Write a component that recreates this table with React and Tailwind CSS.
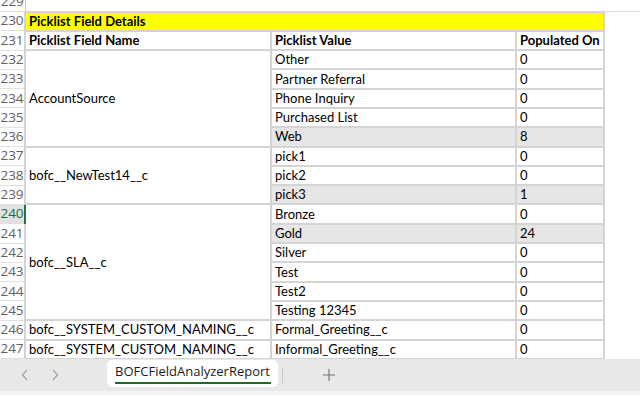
import React from "react";

const FONT = { fontFamily: "Lato, 'Liberation Sans', sans-serif" };

const groups = [
    {
        name: "AccountSource",
        items: [
            ["Other", "0"],
            ["Partner Referral", "0"],
            ["Phone Inquiry", "0"],
            ["Purchased List", "0"],
            ["Web", "8", true],
        ],
    },
    {
        name: "bofc__NewTest14__c",
        items: [
            ["pick1", "0"],
            ["pick2", "0"],
            ["pick3", "1", true],
        ],
    },
    {
        name: "bofc__SLA__c",
        items: [
            ["Bronze", "0"],
            ["Gold", "24", true],
            ["Silver", "0"],
            ["Test", "0"],
            ["Test2", "0"],
            ["Testing 12345", "0"],
        ],
    },
    { name: "bofc__SYSTEM_CUSTOM_NAMING__c", items: [["Formal_Greeting__c", "0"]] },
    { name: "bofc__SYSTEM_CUSTOM_NAMING__c", items: [["Informal_Greeting__c", "0"]] },
];

function RowNum({ n, active }) {
    return (
        <td
            className={
                "p-0 text-center text-[13.5px] leading-none border-b border-b-[#e1e1e1] " +
                (active
                    ? "bg-[#e1e1e1] text-[#1e6b3c] border-r-2 border-r-[#217346]"
                    : "bg-white text-[#616161] border-r border-r-[#c6c6c6]")
            }
            style={{ fontFamily: "'Open Sans', sans-serif" }}
        >
            {n}
        </td>
    );
}

const cell = "px-[3px] py-0 text-[13px] leading-none text-black whitespace-nowrap overflow-hidden border-2 border-[#d4d4d4]";

export default function App() {
    let rowNo = 232;
    const bodyRows = [];

    groups.forEach((g) => {
        g.items.forEach(([value, count, grey], i) => {
            const n = rowNo++;
            bodyRows.push(
                <tr key={n} className="h-[19.3px]">
                    <RowNum n={n} active={n === 240} />
                    {i === 0 && (
                        <td rowSpan={g.items.length} className={cell + " bg-white"}>
                            {g.name}
                        </td>
                    )}
                    <td className={cell + (grey ? " bg-[#e7e6e6]" : " bg-white")}>{value}</td>
                    <td className={cell + (grey ? " bg-[#e7e6e6]" : " bg-white")}>{count}</td>
                    <td className="p-0"></td>
                </tr>
            );
        });
    });

    return (
        <div className="w-[640px] h-[395px] flex flex-col bg-white overflow-hidden" style={FONT}>
            {/* Sheet area */}
            <div className="h-[359px] overflow-hidden">
                <table className="table-fixed border-collapse w-[640px] -mt-[7.8px]">
                    <colgroup>
                        <col className="w-[25px]" />
                        <col className="w-[246px]" />
                        <col className="w-[245px]" />
                        <col className="w-[88px]" />
                        <col />
                    </colgroup>
                    <tbody>
                        <tr className="h-[19.3px]">
                            <RowNum n={229} />
                            <td colSpan={4} className="p-0 border-b border-[#e1e1e1]"></td>
                        </tr>
                        <tr className="h-[19.3px]">
                            <RowNum n={230} />
                            <td colSpan={3} className={cell + " bg-[#ffff00] font-bold"}>
                                Picklist Field Details
                            </td>
                            <td className="p-0"></td>
                        </tr>
                        <tr className="h-[19.3px]">
                            <RowNum n={231} />
                            <td className={cell + " font-bold"}>Picklist Field Name</td>
                            <td className={cell + " font-bold"}>Picklist Value</td>
                            <td className={cell + " font-bold"}>Populated On</td>
                            <td className="p-0"></td>
                        </tr>
                        {bodyRows}
                        <tr className="h-[19.3px]">
                            <RowNum n={248} />
                            <td className={cell}></td>
                            <td className={cell}></td>
                            <td className={cell}></td>
                            <td className="p-0"></td>
                        </tr>
                    </tbody>
                </table>
            </div>

            {/* Sheet tabs */}
            <div className="flex-1 flex flex-col bg-[#f3f3f3]">
                <div className="h-[32px] bg-[#e8e8e8] flex items-stretch" style={{ fontFamily: "'Open Sans', sans-serif" }}>
                    <div className="w-[107px] flex items-center gap-[20px] pl-[20px] text-[#a0a0a0]">
                        <svg width="10" height="14" viewBox="0 0 10 14" fill="none" stroke="currentColor" strokeWidth="1.2">
                            <path d="M7 2 L2.5 7 L7 12" />
                        </svg>
                        <svg width="10" height="14" viewBox="0 0 10 14" fill="none" stroke="currentColor" strokeWidth="1.2">
                            <path d="M3 2 L7.5 7 L3 12" />
                        </svg>
                    </div>
                    <div className="w-[171px] mt-[1px] mb-[4px] bg-white rounded-[5px] flex flex-col items-center justify-center">
                        <span className="text-[13px] leading-none text-[#1b1b1b] pt-[2px]">BOFCFieldAnalyzerReport</span>
                        <span className="mt-[4px] w-[156px] h-[2px] bg-[#1e6b24]"></span>
                    </div>
                    <div className="w-px my-[8px] ml-[4px] bg-[#c8c8c8]"></div>
                    <div className="w-[92px] flex items-center justify-center text-[#707070]">
                        <svg width="14" height="14" viewBox="0 0 14 14" fill="none" stroke="currentColor" strokeWidth="1.1">
                            <path d="M7 1 V13 M1 7 H13" />
                        </svg>
                    </div>
                </div>
            </div>
        </div>
    );
}
